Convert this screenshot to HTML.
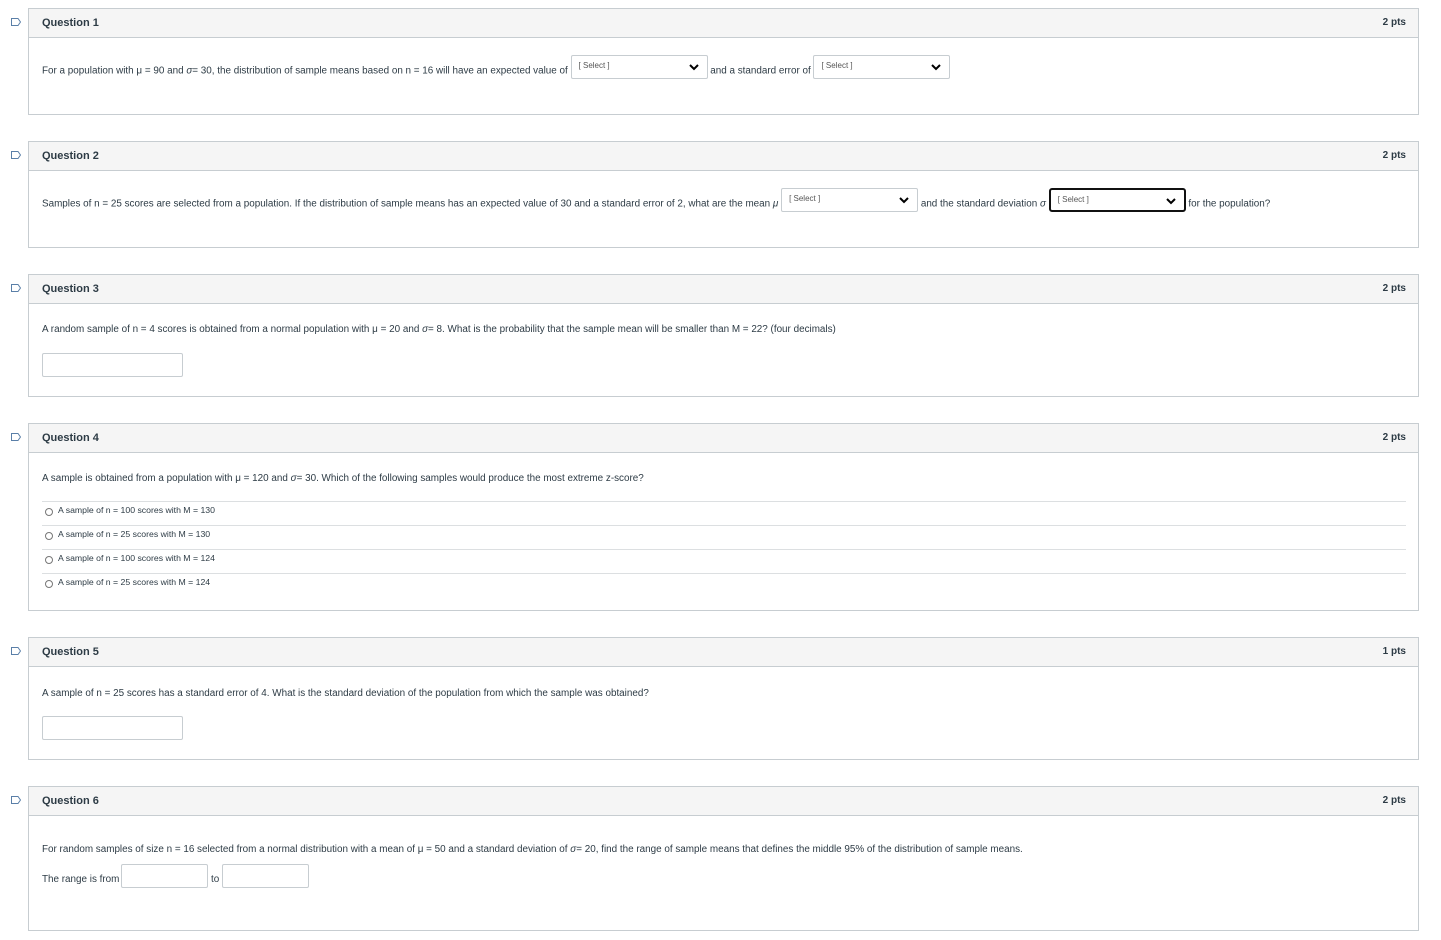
<!DOCTYPE html>
<html><head><style>
body{margin:0;width:1441px;height:940px;background:#fff;font-family:"Liberation Sans",sans-serif;color:#2d3b45;position:relative;overflow:hidden}
.q{position:absolute;left:28px;width:1389px;border:1px solid #c7cdd1;background:#fff}
.h{height:28px;background:#f5f5f5;border-bottom:1px solid #c7cdd1;position:relative}
.h b{position:absolute;left:13px;top:8px;font-size:11px;font-weight:bold;color:#2d3b45}
.h span{position:absolute;right:12px;top:8px;font-size:10px;font-weight:bold}
.t{position:absolute;left:13px;font-size:9.9px;white-space:nowrap}
.flag{position:absolute;left:11px;width:10px;height:8px}
.sel{display:inline-block;position:relative;width:137px;height:24px;border:1px solid #c7cdd1;border-radius:2px;vertical-align:middle;box-sizing:border-box;font-size:8px;color:#555;margin-top:-8px}
.sel i{position:absolute;left:7px;top:5px;font-style:normal}
.sel svg{position:absolute;right:8px;top:8px}
.inp{position:absolute;left:13px;width:141px;height:24px;border:1px solid #c7cdd1;box-sizing:border-box;border-radius:2px}
.opt{position:absolute;left:13px;width:1364px;border-top:1px solid #dcdfe1;height:24px;font-size:8.7px}
.opt .r{position:absolute;left:3px;top:6px;width:6px;height:6px;border:1px solid #777;border-radius:50%}
.opt .l{position:absolute;left:16px;top:3px}
</style></head><body>
<svg class="flag" style="top:18px" viewBox="0 0 10 8"><path d="M0.5 0.5H7L9.5 4L7 7.5H0.5Z" fill="none" stroke="#5a7fa8"/></svg>
<svg class="flag" style="top:151px" viewBox="0 0 10 8"><path d="M0.5 0.5H7L9.5 4L7 7.5H0.5Z" fill="none" stroke="#5a7fa8"/></svg>
<svg class="flag" style="top:284px" viewBox="0 0 10 8"><path d="M0.5 0.5H7L9.5 4L7 7.5H0.5Z" fill="none" stroke="#5a7fa8"/></svg>
<svg class="flag" style="top:433px" viewBox="0 0 10 8"><path d="M0.5 0.5H7L9.5 4L7 7.5H0.5Z" fill="none" stroke="#5a7fa8"/></svg>
<svg class="flag" style="top:647px" viewBox="0 0 10 8"><path d="M0.5 0.5H7L9.5 4L7 7.5H0.5Z" fill="none" stroke="#5a7fa8"/></svg>
<svg class="flag" style="top:796px" viewBox="0 0 10 8"><path d="M0.5 0.5H7L9.5 4L7 7.5H0.5Z" fill="none" stroke="#5a7fa8"/></svg>

<div class="q" style="top:8px;height:105px"><div class="h"><b>Question 1</b><span>2 pts</span></div>
<div class="t" style="top:54px">For a population with μ = 90 and <i>σ</i>= 30, the distribution of sample means based on n = 16 will have an expected value of <span class="sel"><i>[ Select ]</i><svg width="10" height="7" viewBox="0 0 10 7"><path d="M1 1L5 5L9 1" fill="none" stroke="#000" stroke-width="2"/></svg></span> and a standard error of <span class="sel"><i>[ Select ]</i><svg width="10" height="7" viewBox="0 0 10 7"><path d="M1 1L5 5L9 1" fill="none" stroke="#000" stroke-width="2"/></svg></span></div></div>

<div class="q" style="top:141px;height:105px"><div class="h"><b>Question 2</b><span>2 pts</span></div>
<div class="t" style="top:54px">Samples of n = 25 scores are selected from a population. If the distribution of sample means has an expected value of 30 and a standard error of 2, what are the mean <i>μ</i> <span class="sel"><i>[ Select ]</i><svg width="10" height="7" viewBox="0 0 10 7"><path d="M1 1L5 5L9 1" fill="none" stroke="#000" stroke-width="2"/></svg></span> and the standard deviation <i>σ</i> <span class="sel" style="border:2px solid #111;border-radius:3px"><i>[ Select ]</i><svg width="10" height="7" viewBox="0 0 10 7"><path d="M1 1L5 5L9 1" fill="none" stroke="#000" stroke-width="2"/></svg></span> for the population?</div></div>

<div class="q" style="top:274px;height:121px"><div class="h"><b>Question 3</b><span>2 pts</span></div>
<div class="t" style="top:49px">A random sample of n = 4 scores is obtained from a normal population with μ = 20 and <i>σ</i>= 8. What is the probability that the sample mean will be smaller than M = 22? (four decimals)</div>
<div class="inp" style="top:78px"></div></div>

<div class="q" style="top:423px;height:186px"><div class="h"><b>Question 4</b><span>2 pts</span></div>
<div class="t" style="top:49px">A sample is obtained from a population with μ = 120 and <i>σ</i>= 30. Which of the following samples would produce the most extreme z-score?</div>
<div class="opt" style="top:77px"><div class="r"></div><div class="l">A sample of n = 100 scores with M = 130</div></div>
<div class="opt" style="top:101px"><div class="r"></div><div class="l">A sample of n = 25 scores with M = 130</div></div>
<div class="opt" style="top:125px"><div class="r"></div><div class="l">A sample of n = 100 scores with M = 124</div></div>
<div class="opt" style="top:149px"><div class="r"></div><div class="l">A sample of n = 25 scores with M = 124</div></div></div>

<div class="q" style="top:637px;height:121px"><div class="h"><b>Question 5</b><span>1 pts</span></div>
<div class="t" style="top:50px">A sample of n = 25 scores has a standard error of 4. What is the standard deviation of the population from which the sample was obtained?</div>
<div class="inp" style="top:78px"></div></div>

<div class="q" style="top:786px;height:143px"><div class="h"><b>Question 6</b><span>2 pts</span></div>
<div class="t" style="top:57px">For random samples of size n = 16 selected from a normal distribution with a mean of μ = 50 and a standard deviation of <i>σ</i>= 20, find the range of sample means that defines the middle 95% of the distribution of sample means.</div>
<div class="t" style="top:87px">The range is from</div>
<div class="inp" style="top:77px;left:92px;width:87px"></div>
<div class="t" style="top:87px;left:182px">to</div>
<div class="inp" style="top:77px;left:193px;width:87px"></div></div>
</body></html>
